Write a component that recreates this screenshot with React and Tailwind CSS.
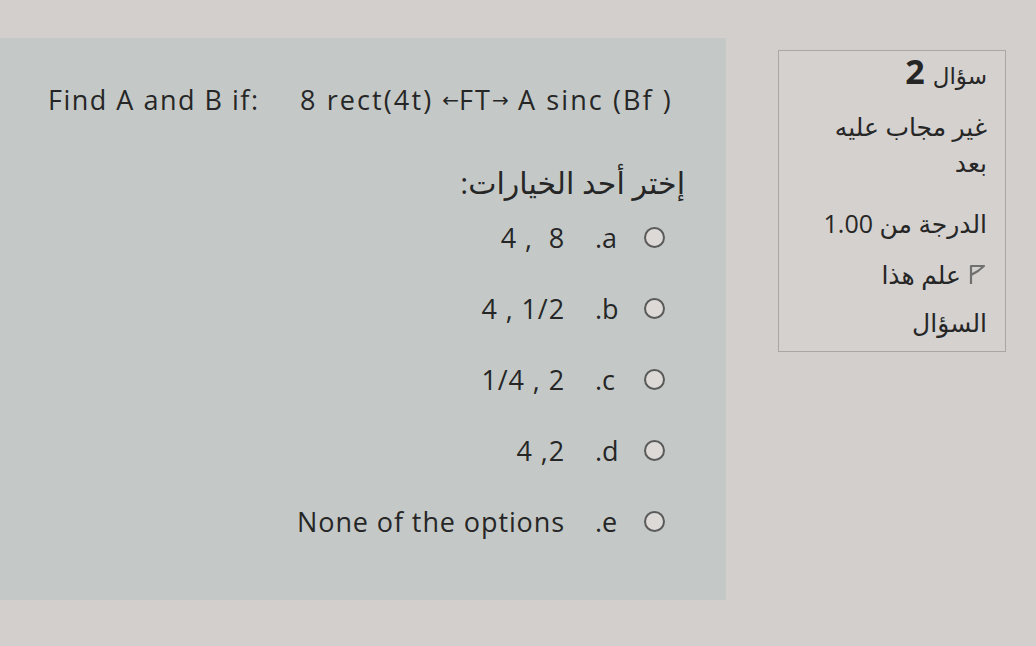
import React from "react";

const font = { fontFamily: '"Open Sans", "DejaVu Sans", sans-serif' };

function Radio() {
  return (
    <span className="inline-block w-[21px] h-[21px] rounded-full border-2 border-[#5a5a5a] bg-[#dcd9d7] shrink-0" />
  );
}

function Option({ label, text }) {
  return (
    <div className="h-[71px] flex items-center">
      <Radio />
      <span dir="ltr" className="mr-[23px] w-[26px] text-left">{label}</span>
      <span dir="ltr" className="mr-[30px] tracking-[0.9px] whitespace-pre">{text}</span>
    </div>
  );
}

function Flag() {
  return (
    <svg width="22" height="22" viewBox="0 0 22 22" className="inline-block shrink-0">
      <path d="M6 21 L6 3 L19 3 L13 8 L6 12" fill="none" stroke="#707070" strokeWidth="2.2" strokeLinejoin="round" />
    </svg>
  );
}

export default function App() {
  return (
    <div
      className="w-[1036px] h-[646px] bg-[#d3cfcd] flex overflow-hidden text-[#262626]"
      style={font}
    >
      <div className="w-[726px] h-[562px] mt-[38px] bg-[#c4c9c7] pt-[46px] shrink-0">
        <div className="flex pl-[48px] text-[27px] leading-[32px] tracking-[1.5px]">
          <span className="w-[252px] shrink-0">Find A and B if:</span>
          <span className="flex items-center tracking-[2.1px]">
            8 rect(4t)&nbsp;<span className="text-[20px] tracking-normal">←</span>FT<span className="text-[20px] tracking-normal">→</span>&nbsp;A sinc (Bf )
          </span>
        </div>
        <div dir="rtl" className="pr-[41px] mt-[48px] text-[27px]">
          <div className="h-[38px] leading-[38px] text-[30px]">إختر أحد الخيارات:</div>
          <div className="pr-[20px] leading-[32px]">
            <Option label=".a" text="4 ,  8" />
            <Option label=".b" text="4 , 1/2" />
            <Option label=".c" text="1/4 , 2" />
            <Option label=".d" text="4 ,2" />
            <Option label=".e" text="None of the options" />
          </div>
        </div>
      </div>
      <div
        dir="rtl"
        className="ml-[52px] mt-[50px] w-[228px] h-[302px] border border-[#a9a6a4] bg-[#d4d1cf] pr-[18px] pt-[2px] text-[25px] leading-[36px] shrink-0"
      >
        <div className="flex items-baseline h-[40px]">
          <span className="text-[23px]">سؤال</span>
          <span className="mr-[8px] text-[34px] font-bold">2</span>
        </div>
        <div className="mt-[15px]">غير مجاب عليه<br />بعد</div>
        <div className="mt-[25px]">الدرجة من 1.00</div>
        <div className="mt-[9px] leading-[48px]">
          <div className="flex items-center">
            <Flag />
            <span className="mr-[4px]">علم هذا</span>
          </div>
          <div>السؤال</div>
        </div>
      </div>
    </div>
  );
}
